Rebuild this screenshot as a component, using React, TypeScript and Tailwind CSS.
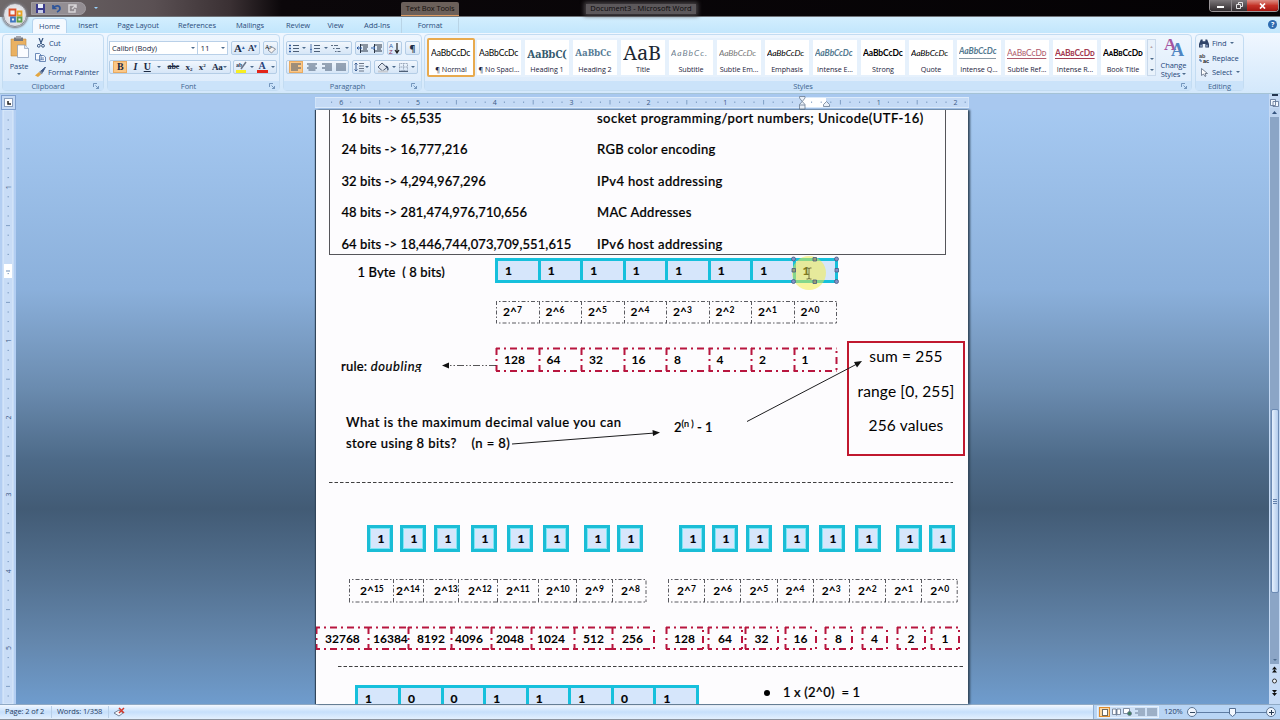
import type { ReactNode } from "react";
import clsx from "clsx";

const TABS = [
  { label: "Home", className: "w-[35px] bg-[#f4f9ff] rounded-t-sm border border-b-0 border-[#b5d3ee]" },
  { label: "Insert", className: "ml-1 w-[34px]" },
  { label: "Page Layout", className: "ml-2 w-[50px]" },
  { label: "References", className: "ml-[9px] w-[50px]" },
  { label: "Mailings", className: "ml-[5px] w-[46px]" },
  { label: "Review", className: "ml-[6px] w-[38px]" },
  { label: "View", className: "w-[37px]" },
  { label: "Add-Ins", className: "ml-[4px] w-[38px]" },
  { label: "Format", className: "ml-[5px] w-[58px] border-x border-[#b9d4e6]" },
];

const STYLES = [
  { sample: "AaBbCcDc", name: "¶ Normal", className: "text-[8.500px] text-black" },
  { sample: "AaBbCcDc", name: "¶ No Spaci...", className: "text-[8.500px] text-black" },
  { sample: "AaBbC(", name: "Heading 1", className: "text-[11px] font-bold text-[#345a6e] font-['Noto_Serif','DejaVu_Serif',serif] tracking-[-0.3px]" },
  { sample: "AaBbCc", name: "Heading 2", className: "text-[9.500px] font-bold text-[#557a94] font-['Noto_Serif','DejaVu_Serif',serif] tracking-[-0.1px]" },
  { sample: "AaB", name: "Title", className: "text-[20px] text-[#1c2733] font-['Noto_Serif','Liberation_Serif',serif] tracking-[-0.2px]" },
  { sample: "AaBbCc.", name: "Subtitle", className: "text-[8.500px] italic text-[#6f7f90] tracking-[1px]" },
  { sample: "AaBbCcDc", name: "Subtle Em...", className: "text-[8.500px] italic text-[#777]" },
  { sample: "AaBbCcDc", name: "Emphasis", className: "text-[8.500px] italic text-black" },
  { sample: "AaBbCcDc", name: "Intense E...", className: "text-[8.500px] italic font-bold text-[#53798f]" },
  { sample: "AaBbCcDc", name: "Strong", className: "text-[8.500px] font-bold text-black" },
  { sample: "AaBbCcDc", name: "Quote", className: "text-[8.500px] italic text-black" },
  { sample: "AaBbCcDc", name: "Intense Q...", className: "text-[8.500px] italic font-bold text-[#53798f] border-b border-[#8a9aa5] pb-[2px]" },
  { sample: "AᴀBʙCᴄDᴅ", name: "Subtle Ref...", className: "text-[8.500px] text-[#b05a6c] underline underline-offset-2 tracking-[-0.2px]" },
  { sample: "AᴀBʙCᴄDᴅ", name: "Intense R...", className: "text-[8.500px] font-bold text-[#a33a50] underline underline-offset-2 tracking-[-0.2px]" },
  { sample: "AᴀBʙCᴄDᴅ", name: "Book Title", className: "text-[8.500px] font-bold text-black tracking-[-0.2px]" },
];

const BIT_SIZES = [
  { size: "16 bits -> 65,535", use: "socket programming/port numbers; Unicode(UTF-16)", className: "tracking-[0.46px]" },
  { size: "24 bits -> 16,777,216", use: "RGB color encoding", className: "tracking-[0.3px]" },
  { size: "32 bits -> 4,294,967,296", use: "IPv4 host addressing", className: "tracking-[0.36px]" },
  { size: "48 bits -> 281,474,976,710,656", use: "MAC Addresses", className: "tracking-[0.3px]" },
  { size: "64 bits -> 18,446,744,073,709,551,615", use: "IPv6 host addressing", className: "tracking-[0.36px]" },
];

const EXPONENTS = ["7", "6", "5", "4", "3", "2", "1", "0"];

const HIGH_POWERS = [
  { exp: "15", className: "w-[44px] pl-[11px]" },
  { exp: "14", className: "w-[30px] pl-[3px]" },
  { exp: "13", className: "w-[35px] pl-[11px]" },
  { exp: "12", className: "w-[39px] pl-[10px]" },
  { exp: "11", className: "w-[41px] pl-[9px]" },
  { exp: "10", className: "w-[38px] pl-[8px]" },
  { exp: "9", className: "w-[36px] pl-[9px]" },
  { exp: "8", className: "w-[34px] pl-[9px]" },
];

const HIGH_VALUES = [
  { value: "32768", className: "w-[52px] pl-[9px]" },
  { value: "16384", className: "w-[40px] pl-[5px]" },
  { value: "8192", className: "w-[43px] pl-[9px]" },
  { value: "4096", className: "w-[40px] pl-[4px]" },
  { value: "2048", className: "w-[40px] pl-[5px]" },
  { value: "1024", className: "w-[43px] pl-[6px]" },
  { value: "512", className: "w-[38px] pl-[9px]" },
  { value: "256", className: "w-[42px] pl-[10px]" },
];

const LOW_VALUES = [
  { value: "128", className: "w-[37px]" },
  { value: "64", className: "ml-[5px] w-[34px]" },
  { value: "32", className: "ml-[3px] w-[33px]" },
  { value: "16", className: "ml-[7px] w-[31px]" },
  { value: "8", className: "ml-[9px] w-[27px]" },
  { value: "4", className: "ml-[10px] w-[25px]" },
  { value: "2", className: "ml-[10px] w-[28px]" },
  { value: "1", className: "ml-[6px] w-[28px]" },
];

const BOX_GAPS = ["", "ml-[7px]", "ml-[8px]", "ml-[11px]", "ml-[10px]", "ml-[10px]", "ml-[15px]", "ml-[7px]"];

function Caret({ className }: { className?: string }) {
  return (
    <svg className={clsx("h-[2px] w-[4px] shrink-0", className)} viewBox="0 0 4 2">
      <path d="M0 0h4L2 2z" fill="#4c6a8c" />
    </svg>
  );
}

function Launcher() {
  return (
    <svg className="h-[6px] w-[6px]" viewBox="0 0 6 6" fill="none" stroke="#5d83ad" strokeWidth="0.8">
      <path d="M.5 4V.5H4M2.500 2.500l3 3M5.500 3v2.500H3" />
    </svg>
  );
}

function Group({ label, className, launcher = true, children }: {
  label: string;
  className: string;
  launcher?: boolean;
  children: ReactNode;
}) {
  return (
    <div className={clsx("flex h-[57px] shrink-0 flex-col rounded-sm border border-[#c3dcf2] bg-linear-to-b from-[#eef6fe] to-[#dcebfb]", className)}>
      <div className="h-[46px]">{children}</div>
      <div className="flex h-[9px] items-center bg-[#cbe3fa] text-[#3f6590]">
        <span className="flex-1 text-center">{label}</span>
        {launcher && <span className="mr-[4px]"><Launcher /></span>}
      </div>
    </div>
  );
}

function Tools({ className, children }: { className?: string; children: ReactNode }) {
  return (
    <div className={clsx("flex h-[14px] items-center justify-around rounded-xs border border-[#b4cde6] bg-linear-to-b from-[#f2f7fd] to-[#d6e6f7] leading-none", className)}>
      {children}
    </div>
  );
}

function Lines({ kind, className }: { kind: "left" | "center" | "right" | "full"; className?: string }) {
  const d = {
    left: "M0 1h10M0 3h7M0 5h10M0 7h7",
    center: "M0 1h10M1.500 3h7M0 5h10M1.500 7h7",
    right: "M0 1h10M3 3h7M0 5h10M3 7h7",
    full: "M0 1h10M0 3h10M0 5h10M0 7h10",
  }[kind];
  return (
    <svg className={clsx("h-[8px] w-[10px]", className)} viewBox="0 0 10 8" stroke="#41556e" strokeWidth="1">
      <path d={d} />
    </svg>
  );
}

function ListIcon({ kind }: { kind: "bullet" | "number" | "multi" }) {
  return (
    <svg className="h-[9px] w-[10px]" viewBox="0 0 10 9" stroke="#4d5f76" strokeWidth="1">
      {kind === "bullet" && <path d="M0 1.500h2M0 4.500h2M0 7.500h2" stroke="#2d5aa0" strokeWidth="1.600" />}
      {kind === "number" && <path d="M1 0v3M0 4h2M0 5.500h2M1 6v3" stroke="#2d5aa0" strokeWidth=".8" />}
      {kind === "multi" ? (
        <path d="M0 1.500h2M3 1.500h4M2 4.500h1.500M5 4.500h4M4 7.500h1.500M6.500 7.500h3" strokeWidth=".9" />
      ) : (
        <path d="M4 1.500h6M4 4.500h6M4 7.500h6" />
      )}
    </svg>
  );
}

function IndentIcon({ flip }: { flip?: boolean }) {
  return (
    <svg className="h-[9px] w-[11px]" viewBox="0 0 11 9" stroke="#2a3646" fill="none">
      <path d="M4 1h7M6 3h5M6 5h4M3 7h8M3.500 0v9" strokeWidth="1" />
      <path d={flip ? "M0 4h4M2.500 2.500L4 4 2.500 5.500" : "M5 4H0M1.500 2.500L0 4l1.500 1.500"} stroke="#2d5aa0" />
    </svg>
  );
}

function TitleBar() {
  return (
    <header className="relative flex h-[17px] shrink-0 items-center border-b border-[#6f7378] bg-[linear-gradient(90deg,#6f696b_0%,#5a5053_12%,#3a3033_18%,#0b070a_22%,#040204_100%)]">
      <div className="ml-[31px] flex h-[13px] w-[55px] items-center gap-[7px] rounded-r-full border border-[#a09ca1] bg-[#a6a3a8]/70 pl-[4px]">
        <svg className="h-[9px] w-[9px]" viewBox="0 0 9 9">
          <path d="M0 0h9v9H0z" fill="#3a3a8c" />
          <path d="M2 0h5v4H2z" fill="#e9effb" />
          <path d="M2 6h5v3H2z" fill="#c5cbe8" />
        </svg>
        <svg className="h-[9px] w-[9px]" viewBox="0 0 9 9" fill="none" stroke="#2f5599" strokeWidth="1.700">
          <path d="M1 1v3.500h3.500M1.500 4C3 1 8 1 8 4.500 8 6.500 6 7.500 5 8" />
        </svg>
        <svg className="h-[9px] w-[9px]" viewBox="0 0 9 9" fill="none" stroke="#d8d5d8" strokeWidth="1.500">
          <path d="M5 1H1v7h6V5M4 5l4-4M5 1h3v3" />
        </svg>
      </div>
      <Caret className="ml-[8px] brightness-200" />
      <div className="absolute left-[401px] top-[2px] flex h-[14px] w-[58px] items-center justify-center rounded-t-xs border-b border-[#d9985f] bg-[#6b605a] text-[7.500px] tracking-[-0.15px] text-[#15100e]">
        Text Box Tools
      </div>
      <div className="absolute left-[586px] top-[4px] flex h-[10px] w-[110px] items-center justify-center whitespace-nowrap bg-[#5c585b] text-[7.500px] text-[#0c0a0c] shadow-[0_0_4px_2px_#464245]">
        Document3 - Microsoft Word
      </div>
      <div className="absolute right-[1px] top-0 flex h-[12px] overflow-hidden rounded-b-sm border border-t-0 border-[#9a9598]">
        <div className="flex w-[22px] items-center justify-center border-r border-[#8d888b] bg-linear-to-b from-[#7c777a] to-[#322d30]">
          <span className="mt-[2px] h-[2px] w-[7px] bg-white" />
        </div>
        <div className="flex w-[15px] items-center justify-center bg-linear-to-b from-[#7c777a] to-[#322d30]">
          <svg className="h-[7px] w-[7px]" viewBox="0 0 7 7" fill="none" stroke="#e6e6e6">
            <path d="M2.500 2V.5h4v4H5M.5 2.500h4v4h-4z" />
          </svg>
        </div>
        <div className="flex w-[31px] items-center justify-center bg-linear-to-b from-[#dc8d84] via-[#c43228] to-[#a5150f]">
          <svg className="h-[6px] w-[7px]" viewBox="0 0 7 6" stroke="white" strokeWidth="1.700">
            <path d="M1 .5l5 5M6 .5l-5 5" />
          </svg>
        </div>
      </div>
    </header>
  );
}

function TabBar() {
  return (
    <nav className="flex h-[16px] shrink-0 items-end bg-linear-to-b from-[#d3eefe] to-[#c2e6fc] pl-[32px] text-[7.500px] tracking-[-0.1px] text-[#2b4c7c]">
      {TABS.map((tab) => (
        <div key={tab.label} className={clsx("flex h-[15px] items-center justify-center pt-px whitespace-nowrap", tab.className)}>
          {tab.label}
        </div>
      ))}
      <div className="mr-[3px] mb-[4px] ml-auto flex h-[9px] w-[9px] items-center justify-center rounded-full bg-[#2f6cb0] text-[7px] font-bold leading-none text-white">
        ?
      </div>
    </nav>
  );
}

function ClipboardGroup() {
  return (
    <Group label="Clipboard" className="w-[102px]">
      <div className="flex">
        <div className="flex w-[32px] flex-col items-center pt-[1px]">
          <svg className="h-[22px] w-[19px]" viewBox="0 0 19 22">
            <path d="M1 3h15v17H1z" fill="#eab162" stroke="#c08a45" strokeWidth=".6" />
            <path d="M4 1.500h9V5H4z" fill="#75767c" />
            <path d="M6 0h5v2.500H6z" fill="#a5a6ac" />
            <path d="M7.500 9h7l4 3.500V21.500H7.500z" fill="#fbfcff" stroke="#8296b4" strokeWidth=".7" />
            <path d="M14.500 9v3.500h4" fill="#dae5f4" stroke="#8296b4" strokeWidth=".6" />
          </svg>
          <span className="mt-[3px] leading-[10px] text-[7.500px]">Paste</span>
          <Caret className="mt-[2px]" />
        </div>
        <div className="flex flex-col pt-px whitespace-nowrap">
          <div className="flex h-[14.500px] items-center gap-[4px]">
            <svg className="ml-[2px] h-[10px] w-[8px]" viewBox="0 0 8 10" fill="none" stroke="#34527e">
              <path d="M2 0l2.500 6M6 0L3.500 6" strokeWidth="1.200" />
              <circle cx="1.800" cy="7.800" r="1.400" />
              <circle cx="6" cy="7.800" r="1.400" />
            </svg>
            Cut
          </div>
          <div className="flex h-[14.500px] items-center gap-[3px]">
            <svg className="h-[9px] w-[11px]" viewBox="0 0 11 9" fill="#f5f9ff" stroke="#4a6ea6" strokeWidth=".8">
              <path d="M.5.5h4l1.500 1.500v5H.5zM4.500 2.500h4L10.500 4v4.500h-6zM6 5h3M6 6.700h3" />
            </svg>
            Copy
          </div>
          <div className="flex h-[14.500px] items-center gap-[2px]">
            <svg className="h-[10px] w-[11px]" viewBox="0 0 11 10">
              <path d="M10.500 0L6 4l1.500 1.500z" fill="#3d5786" stroke="#3d5786" />
              <path d="M5.500 3.500l2.500 2.500-2 1.500L4 5z" fill="#7e8aa0" />
              <path d="M4 5l2 2.500L3 10 0 8.500z" fill="#e3a640" />
            </svg>
            Format Painter
          </div>
        </div>
      </div>
    </Group>
  );
}

function FontGroup() {
  return (
    <Group label="Font" className="ml-[3px] w-[173px]">
      <div className="flex flex-col gap-[5px] px-[1px] pt-[6px] text-[#1b2a42]">
        <div className="flex">
          <div className="flex h-[14px] w-[90px] items-center justify-between border border-[#b9d0e8] bg-white px-[2px] text-[7.500px]">
            Calibri (Body)
            <Caret />
          </div>
          <div className="flex h-[14px] w-[30px] items-center justify-between border border-l-0 border-[#b9d0e8] bg-white px-[2px] text-[8px]">
            11
            <Caret />
          </div>
          <Tools className="ml-[3px] w-[29px] font-['Liberation_Serif',serif] font-bold">
            <span className="text-[11px]">A<sup className="text-[5px] text-[#2d5aa0]">▴</sup></span>
            <span className="text-[9px]">A<sup className="text-[5px] text-[#2d5aa0]">▾</sup></span>
          </Tools>
          <Tools className="ml-[3px] w-[15px]">
            <svg className="h-[11px] w-[11px]" viewBox="0 0 11 11">
              <text x="0" y="6" fontSize="6" fontFamily="Liberation Serif">Aa</text>
              <path d="M3 7l4-3 3.500 2-4 4z" fill="#f7f3f0" stroke="#6e7787" strokeWidth=".8" />
            </svg>
          </Tools>
        </div>
        <div className="flex">
          <Tools className="w-[122px] font-['Liberation_Serif',serif] text-[9px] font-bold">
            <span className="flex h-[12px] w-[14px] items-center justify-center border border-[#e9ab62] bg-[#fbc786] text-[10px]">B</span>
            <span className="text-[10px] italic">I</span>
            <span className="text-[10px] underline">U</span>
            <Caret />
            <span className="text-[8px] line-through">abc</span>
            <span>x<sub className="text-[5px]">2</sub></span>
            <span>x<sup className="text-[5px]">2</sup></span>
            <span className="flex items-center">Aa<Caret /></span>
          </Tools>
          <Tools className="ml-[2px] w-[44px]">
            <svg className="h-[12px] w-[11px]" viewBox="0 0 11 12">
              <path d="M0 9h10v3H0z" fill="#f7ee23" />
              <text x="0" y="6" fontSize="6" fontWeight="bold" fontFamily="Liberation Serif" fill="#2c3c55">ab</text>
              <path d="M5 8l5-7" stroke="#6b7688" strokeWidth="1.500" />
            </svg>
            <Caret />
            <svg className="h-[12px] w-[11px] overflow-visible" viewBox="0 0 11 12">
              <path d="M0 9h11v3H0z" fill="#e32519" />
              <text x="1.500" y="8" fontSize="10" fontWeight="bold" fontFamily="Liberation Serif" fill="#27427c">A</text>
            </svg>
            <Caret />
          </Tools>
        </div>
      </div>
    </Group>
  );
}

function ParagraphGroup() {
  return (
    <Group label="Paragraph" className="ml-[3px] w-[139px]">
      <div className="flex flex-col gap-[5px] pt-[6px] pl-[2px]">
        <div className="flex gap-[3px]">
          <Tools className="w-[66px]">
            <ListIcon kind="bullet" />
            <Caret />
            <ListIcon kind="number" />
            <Caret />
            <ListIcon kind="multi" />
            <Caret />
          </Tools>
          <Tools className="w-[29px]">
            <IndentIcon />
            <IndentIcon flip />
          </Tools>
          <Tools className="w-[15px]">
            <svg className="h-[11px] w-[11px]" viewBox="0 0 11 11">
              <text x="0" y="5" fontSize="6" fill="#2d5aa0" fontFamily="Liberation Sans">A</text>
              <text x="0" y="11" fontSize="6" fill="#8b3562" fontFamily="Liberation Sans">Z</text>
              <path d="M8 0v9M6 7l2 3 2-3" fill="none" stroke="#222" strokeWidth="1.200" />
            </svg>
          </Tools>
          <Tools className="w-[15px] text-[9px] font-bold text-[#1d2e49]">
            <span>¶</span>
          </Tools>
        </div>
        <div className="flex gap-[3px]">
          <Tools className="w-[63px]">
            <span className="flex h-[12px] w-[14px] items-center justify-center border border-[#e9ab62] bg-[#fbc786]">
              <Lines kind="left" />
            </span>
            <Lines kind="center" />
            <Lines kind="right" />
            <Lines kind="full" />
          </Tools>
          <Tools className="w-[19px]">
            <svg className="h-[10px] w-[10px]" viewBox="0 0 10 10" fill="none" stroke="#3c5f94">
              <path d="M2 1v8M.5 2.500L2 1l1.500 1.500M.5 7.500L2 9l1.500-1.500" />
              <path d="M5 1.500h5M5 4h5M5 6.500h5M5 9h5" stroke="#5d6a7c" strokeWidth=".9" />
            </svg>
            <Caret />
          </Tools>
          <Tools className="w-[44px]">
            <svg className="h-[11px] w-[12px]" viewBox="0 0 12 11">
              <path d="M1 5l4-4 5 4.500L5.500 9z" fill="#dfe5ee" stroke="#4c5a70" />
              <path d="M9 4c2 1 2.500 3 1.500 4.500" fill="none" stroke="#2c3e5c" strokeWidth="1.200" />
              <path d="M1 9.500h10" stroke="#c9ccd2" strokeWidth="2" />
            </svg>
            <Caret />
            <svg className="h-[9px] w-[9px]" viewBox="0 0 9 9" fill="none" stroke="#7f8ea5" strokeWidth=".8">
              <path d="M.5.5h8v7h-8zM4.500.5v7M.5 4h8" strokeDasharray="1 .6" />
              <path d="M0 8.500h9" stroke="#2b3c55" />
            </svg>
            <Caret />
          </Tools>
        </div>
      </div>
    </Group>
  );
}

function StylesGroup() {
  return (
    <Group label="Styles" className="ml-[2px] w-[768px]">
      <div className="flex">
        <div className="flex pt-[3px] pl-[2px]">
          {STYLES.map((style, i) => (
            <div
              key={style.name}
              className={clsx(
                "flex h-[39px] w-[48px] flex-col items-center overflow-hidden border-2 bg-white",
                i === 0 ? "rounded-xs border-[#e8aa4e]" : "border-[#e6f1fc] border-x-[2.500px]",
              )}
            >
              <div className="flex h-[24px] w-[40px] items-center overflow-hidden whitespace-nowrap pt-[2px] leading-none">
                <span className={clsx("font-['Lato',sans-serif]", style.className)}>{style.sample}</span>
              </div>
              <div className="h-[11px] whitespace-nowrap text-[7.200px] leading-[11px] tracking-[-0.05px] text-[#1d2440]">{style.name}</div>
            </div>
          ))}
        </div>
        <div className="mt-[4px] flex h-[37px] w-[9px] flex-col justify-around border border-[#c9d9eb] bg-[#e9f2fb]">
          <span className="text-center text-[4px] leading-none text-[#b7a4a8]">▲</span>
          <Caret className="mx-auto" />
          <Caret className="mx-auto" />
        </div>
        <div className="ml-[1px] flex w-[33px] flex-col items-center pt-[2px] text-center">
          <svg className="h-[22px] w-[20px] overflow-visible" viewBox="0 0 20 22">
            <text x="0" y="13" fontSize="17" fontWeight="bold" fontFamily="Liberation Serif" fill="#a4549f">A</text>
            <text x="7" y="19" fontSize="18" fontWeight="bold" fontFamily="Liberation Serif" fill="#4f86c2">A</text>
          </svg>
          <div className="mt-[2px] text-[7.500px] leading-[9px]">Change</div>
          <div className="flex items-center gap-[2px] text-[7.500px] leading-[8px]">Styles<Caret /></div>
        </div>
      </div>
    </Group>
  );
}

function EditingGroup() {
  return (
    <Group label="Editing" launcher={false} className="ml-[3px] w-[49px]">
      <div className="flex flex-col pt-px pl-[3px] whitespace-nowrap">
        <div className="flex h-[14.500px] items-center gap-[3px]">
          <svg className="h-[9px] w-[10px]" viewBox="0 0 11 9" fill="#2f4468">
            <path d="M2 0h2v2h3V0h2l2 5v4H7V5H4v4H0V5z" />
            <path d="M1.500 6h1.500v2H1.500zM8 6h1.500v2H8z" fill="#9fb4d6" />
          </svg>
          Find <Caret />
        </div>
        <div className="flex h-[14.500px] items-center gap-[2px]">
          <svg className="h-[10px] w-[11px]" viewBox="0 0 11 10">
            <text x="0" y="4.500" fontSize="5.500" fontWeight="bold" fontFamily="Liberation Sans" fill="#444">ab</text>
            <text x="4" y="10" fontSize="5.500" fontWeight="bold" fontFamily="Liberation Sans" fill="#222">ac</text>
            <path d="M1 6v2h2" fill="none" stroke="#2d5aa0" />
          </svg>
          Replace
        </div>
        <div className="flex h-[14.500px] items-center gap-[4px]">
          <svg className="ml-[2px] h-[9px] w-[7px]" viewBox="0 0 7 9" fill="white" stroke="#59677c" strokeWidth=".8">
            <path d="M.5.5v7l2-1.500L4 8.500l1-.5-1-2.500h2.500z" />
          </svg>
          Select <Caret />
        </div>
      </div>
    </Group>
  );
}

function HorizontalRuler() {
  const ticks = Array.from({ length: 68 }, (_, i) => i - 49);
  return (
    <svg className="absolute left-[315px] top-[1px] h-[17px] w-[654px]" viewBox="315 95 654 17">
      <path d="M315 97.500h654v10h-654z" fill="#c4daf5" stroke="#dcebfb" />
      <path d="M802 98h24v9h-24z" fill="#fff" />
      {ticks.map((i) => {
        const x = 802 + i * 9.6;
        if (i % 8 === 0) {
          return i === 0 ? null : (
            <text key={i} x={x} y="105" textAnchor="middle" fontSize="7" fontFamily="Open Sans" fill="#3c5a86">
              {Math.abs(i / 8)}
            </text>
          );
        }
        return <path key={i} d={i % 4 === 0 ? `M${x} 100v4.500` : `M${x} 101.500v1.500`} stroke="#6f8fb8" strokeWidth=".8" />;
      })}
      <path d="M799.500 96.500h5.500v1.500l-2.700 3.500 2.700 3v4.500h-5.500v-4.500l2.700-3-2.700-3.500zM799.500 105h5.500" fill="#eaf0f8" stroke="#6b7c93" strokeWidth=".8" />
      <path d="M823.500 106.500v-2l3-3 3 3v2z" fill="#eaf0f8" stroke="#6b7c93" strokeWidth=".8" />
    </svg>
  );
}

function VerticalRuler() {
  const ticks = Array.from({ length: 62 }, (_, i) => i - 15);
  return (
    <div className="w-[16px] bg-[#b3cef2]">
      <svg className="mt-[16px] h-[594px] w-[16px]" viewBox="0 110 16 594">
        <path d="M3 110h10v594H3z" fill="#c8dcf6" stroke="#dcebfb" />
        <path d="M4 264h8v14H4z" fill="#fff" />
        {ticks.map((i) => {
          const y = 264 + i * 9.6;
          if (i % 8 === 0) {
            return i === 0 ? null : (
              <text key={i} x="0" y="0" transform={`translate(10.500 ${y}) rotate(-90)`} textAnchor="middle" fontSize="7" fontFamily="Open Sans" fill="#3c5a86">
                {Math.abs(i / 8)}
              </text>
            );
          }
          return <path key={i} d={i % 4 === 0 ? `M6 ${y}h4` : `M7.500 ${y}h1.500`} stroke="#6f8fb8" strokeWidth=".8" />;
        })}
        <path d="M6 271h4" stroke="#6f8fb8" />
      </svg>
    </div>
  );
}

// Dash-dot text box outline. The right edge is left to the next cell unless the box is closed.
function DashBox({ tone, closed, className, children }: {
  tone: "thin" | "red";
  closed?: boolean;
  className?: string;
  children: ReactNode;
}) {
  const red = tone === "red";
  return (
    <div className={clsx("relative flex shrink-0 items-center", className)}>
      <svg
        className="absolute inset-0 h-full w-full overflow-visible"
        stroke={red ? "#b8163f" : "#5a5a60"}
        strokeWidth={red ? 2 : 1}
        strokeDasharray={red ? "7 4 2 4" : "4 2 1.500 2"}
      >
        <line x1="0" y1="0.5" x2="100%" y2="0.5" strokeDashoffset="3" />
        <line x1="0" y1="100%" x2="100%" y2="100%" strokeDashoffset="3" />
        <line x1="0.5" y1="0" x2="0.5" y2="100%" />
        {closed && <line x1="100%" y1="0" x2="100%" y2="100%" strokeDashoffset="8" />}
      </svg>
      <span className="relative">{children}</span>
    </div>
  );
}

function Power({ exp }: { exp: string }) {
  return (
    <>
      2^<sup className="-top-[3.500px] text-[8.500px] leading-none">{exp}</sup>
    </>
  );
}

function ByteCells({ bits, className }: { bits: string; className?: string }) {
  return (
    <div className={clsx("flex border-[3px] border-[#16c0dc] bg-[#d6e6fb] text-[12px] font-bold", className)}>
      {bits.split("").map((bit, i) => (
        <div key={i} className={clsx("flex h-full items-center", i === 0 ? "w-[40px] pl-[7px]" : "w-[42.600px] border-l-[3px] border-[#16c0dc] pl-[7px]")}>
          {bit}
        </div>
      ))}
    </div>
  );
}

function LooseBits({ className }: { className?: string }) {
  return (
    <div className={clsx("flex", className)}>
      {BOX_GAPS.map((gap, i) => (
        <div key={i} className={clsx("flex h-[27px] w-[26px] items-center justify-center border-[3px] border-[#1bbdd6] bg-[#d6e6fb] pt-px pl-[2px] text-[12px] font-bold shadow-[inset_0_0_0_1px_#7fe6f6]", gap)}>
          1
        </div>
      ))}
    </div>
  );
}

function DocumentPage() {
  return (
    <main className="absolute left-[316px] top-[16px] h-[594px] w-[652px] overflow-hidden bg-[#fdfcfe] font-['Lato',sans-serif] text-[13px] font-medium leading-none text-black shadow-[2px_0_2px_#33475c,-1px_0_1px_#33475c] [-webkit-text-stroke:0.2px_#000]">
      <section className="ml-[13px] h-[145px] w-[617px] overflow-hidden border border-t-0 border-[#55555a]">
        <div className="-mt-[7.500px] pl-[11.500px]">
          {BIT_SIZES.map(({ size, use, className }) => (
            <div key={size} className="grid h-[31.500px] grid-cols-[255.500px_1fr] items-center whitespace-nowrap">
              <span className="tracking-[0.08px]">{size}</span>
              <span className={className}>{use}</span>
            </div>
          ))}
        </div>
      </section>

      <div className="flex h-[45px] items-start pt-[3px]">
        <div className="ml-[41.500px] mt-[8px] h-[12px] w-[137.500px] overflow-hidden whitespace-pre tracking-[0.1px]">1 Byte  ( 8 bits)</div>
        <ByteCells bits="11111111" className="h-[25px] w-[343px]" />
      </div>

      <div className="mt-[1px] ml-[180px] flex text-[12px] font-bold [-webkit-text-stroke:0]">
        {EXPONENTS.map((exp) => (
          <DashBox key={exp} tone="thin" closed={exp === "0"} className="h-[22px] w-[42.500px] pl-[7px]">
            <Power exp={exp} />
          </DashBox>
        ))}
      </div>

      <div className="mt-[25px] flex">
        <div className="ml-[25px] mt-[12px] h-[12px] w-[155px] overflow-hidden tracking-[0.2px]">
          rule: <i className="font-normal tracking-[0.6px]">doubling</i>
        </div>
        <div className="flex text-[12px] font-bold [-webkit-text-stroke:0]">
          {["128", "64", "32", "16", "8", "4", "2", "1"].map((value) => (
            <DashBox key={value} tone="red" closed={value === "1"} className="h-[23px] w-[42.500px] pl-[8px]">
              {value}
            </DashBox>
          ))}
        </div>
      </div>

      <div className="flex pt-[40px]">
        <div className="ml-[30px] w-[328px] whitespace-pre leading-[21px]">
          <div className="tracking-[0.55px]">What is the maximum decimal value you can</div>
          <div className="tracking-[0.4px]">store using 8 bits?    (n = 8)</div>
        </div>
        <div className="mt-[9px]">
          2<sup className="-top-[5px] text-[9px] leading-none">(n )</sup> - 1
        </div>
      </div>

      <div className="absolute left-[531px] top-[231px] flex h-[115px] w-[118px] flex-col items-center border-2 border-[#c0182f] text-[15.500px] font-normal leading-[34.500px] tracking-[0.15px] whitespace-nowrap [-webkit-text-stroke:0]">
        <div className="-mt-[4px]">sum = 255</div>
        <div>range [0, 255]</div>
        <div>256 values</div>
      </div>

      {/* connectors between the text boxes */}
      <svg className="absolute left-0 top-0 h-[594px] w-[652px]" viewBox="316 110 652 594" fill="none" stroke="#1d1d1f" strokeWidth="1">
        <path d="M496 365.500h-46" strokeDasharray="7 2 1.500 2 1.500 2" strokeOpacity=".75" />
        <path d="M442 365.500l7-3v6z" fill="#111" stroke="none" />
        <path d="M512 444l143-11" />
        <path d="M660 432.500l-7.500-2.500.5 6z" fill="#111" stroke="none" />
        <path d="M747 421.500l109-57" />
        <path d="M862 361l-8 1 3 5.500z" fill="#111" stroke="none" />
        <path d="M329 482.500h624M338 666.500h625" strokeDasharray="3.500 2" strokeOpacity=".85" />
      </svg>

      <div className="absolute left-[51px] top-[415px] flex">
        <LooseBits />
        <LooseBits className="ml-[36px]" />
      </div>

      <div className="absolute left-[33px] top-[469px] flex text-[12px] font-bold [-webkit-text-stroke:0]">
        {HIGH_POWERS.map(({ exp, className }) => (
          <DashBox key={exp} tone="thin" closed={exp === "8"} className={clsx("h-[23px] pt-px", className)}>
            <Power exp={exp} />
          </DashBox>
        ))}
        <div className="ml-[22px] flex">
          {EXPONENTS.map((exp) => (
            <DashBox key={exp} tone="thin" closed={exp === "0"} className="h-[23px] w-[36.200px] pt-px pl-[9px]">
              <Power exp={exp} />
            </DashBox>
          ))}
        </div>
      </div>

      <div className="absolute left-0 top-[517px] flex text-[12px] font-bold [-webkit-text-stroke:0]">
        {HIGH_VALUES.map(({ value, className }) => (
          <DashBox key={value} tone="red" closed={value === "256"} className={clsx("h-[22px] pt-px", className)}>
            {value}
          </DashBox>
        ))}
        <div className="ml-[12px] flex">
          {LOW_VALUES.map(({ value, className }) => (
            <DashBox key={value} tone="red" closed className={clsx("h-[22px] justify-center pt-px", className)}>
              {value}
            </DashBox>
          ))}
        </div>
      </div>

      <div className="absolute left-[39px] top-[575px] flex items-start">
        <ByteCells bits="10011101" className="h-[28px] w-[344px]" />
        <div className="mt-[1px] ml-[65px] flex items-center whitespace-pre tracking-[0.15px]">
          <span className="mr-[13px] h-[6px] w-[6px] rounded-full bg-black" />
          1 x (2^0)  = 1
        </div>
      </div>

      <SelectedCell />
    </main>
  );
}

function SelectedCell() {
  return (
    <svg className="absolute left-[472px] top-[143px] h-[38px] w-[54px]" viewBox="788 253 54 38">
      <circle cx="809" cy="273" r="17" fill="#f5ee3c" fillOpacity=".5" />
      <g fill="#7f93c8" stroke="#4a5a80" strokeWidth=".8">
        <circle cx="793.500" cy="259" r="2" />
        <circle cx="836.500" cy="259" r="2" />
        <circle cx="793.500" cy="281.500" r="2" />
        <circle cx="836.500" cy="281.500" r="2" />
        <path d="M835 268.500h3.500v3.500H835z" />
        <path d="M792 268.500h3.500v3.500H792zM813 257.500h3.500v3.500H813zM813 280h3.500v3.500H813z" fill="#9a9f72" />
      </g>
      <path d="M806.500 268h2l.5 1 .5-1h2M809 269v9M806.500 279h2l.5-1 .5 1h2" fill="none" stroke="#56562c" strokeWidth=".8" />
    </svg>
  );
}

function ScrollBar() {
  return (
    <div className="ml-auto flex w-[11px] flex-col items-center bg-[#c5daf5]">
      <div className="h-[2px] w-[6px] bg-[#24354f]" />
      <svg className="mt-[2px] h-[10px] w-[9px]" viewBox="0 0 9 10" fill="#f3f8ff" stroke="#5a6f90" strokeWidth=".8">
        <path d="M.5 1.500h5v6h-5zM3 3.500h5.500v5H3z" />
      </svg>
      <div className="flex h-[556px] w-[9px] flex-col items-center bg-[#8ba5c6]">
        <div className="flex h-[9px] w-full items-center justify-center bg-[#bdd3ef]">
          <svg className="h-[3px] w-[5px]" viewBox="0 0 5 3"><path d="M0 3h5L2.500 0z" fill="#35547f" /></svg>
        </div>
        <div className="mt-[292px] flex h-[184px] w-[8px] flex-col items-center justify-center gap-[1px] rounded-xs border border-[#6c8bb4] bg-linear-to-r from-[#e5f0fd] to-[#b4cdec]">
          <span className="h-px w-[4px] bg-[#6482ad]" />
          <span className="h-px w-[4px] bg-[#6482ad]" />
          <span className="h-px w-[4px] bg-[#6482ad]" />
        </div>
        <Caret className="mt-auto mb-[3px]" />
      </div>
      <svg className="h-[34px] w-[7px]" viewBox="0 0 7 34" fill="#111">
        <path d="M1 5.500l2.500-3 2.500 3zM1 8.500l2.500-3 2.500 3zM1 26h5l-2.500 3zM1 29h5l-2.500 3z" />
        <circle cx="3.500" cy="17" r="2" fill="#f2f6fc" stroke="#333" />
      </svg>
    </div>
  );
}

function StatusBar() {
  return (
    <footer className="flex h-[15px] shrink-0 items-center border-t border-[#8fa9c4] bg-linear-to-b from-[#f2f8ff] via-[#c6dffb] to-[#e3f0fe] text-[7.500px] text-[#274064]">
      <div className="ml-[5px] w-[46px] tracking-[-0.1px]">Page: 2 of 2</div>
      <div className="w-[58px] border-x border-[#b8cfe8] pl-[5px] tracking-[-0.1px]">Words: 1/358</div>
      <svg className="ml-[5px] h-[10px] w-[11px]" viewBox="0 0 11 10">
        <path d="M0 6l5-3 4 3-4 3z" fill="#f4f6fa" stroke="#5a6a82" strokeWidth=".8" />
        <path d="M5 1l5 5M10 1L5 6" stroke="#d2372b" strokeWidth="1.500" />
      </svg>
      <div className="ml-auto flex h-full items-center border-l border-[#91aed0] bg-[#b9d5f4] pl-[3px]">
        <div className="flex h-[12px] w-[62px] items-center justify-around border border-[#e6f1fd] bg-[#cfe1f6]">
          <span className="flex h-[10px] w-[11px] items-center justify-center border border-[#e08c2c] bg-[#fbd7a0]">
            <span className="h-[7px] w-[6px] border border-[#6f6a60] bg-white" />
          </span>
          <svg className="h-[8px] w-[9px]" viewBox="0 0 9 8" fill="white" stroke="#66758c" strokeWidth=".8"><path d="M.5 1h3.500v5.500H.5zM5 1h3.500v5.500H5zM4.500 1v6.500" /></svg>
          <svg className="h-[8px] w-[9px]" viewBox="0 0 9 8" fill="white" stroke="#66758c" strokeWidth=".8"><path d="M.5.5h6v5h-6z" /><circle cx="6.500" cy="5.500" r="2" fill="#3f7f5c" /></svg>
          <Lines kind="right" className="h-[7px] w-[7px] opacity-70" />
          <Lines kind="full" className="h-[7px] w-[8px] opacity-70" />
        </div>
        <span className="ml-[5px] w-[20px] tracking-[-0.1px]">120%</span>
        <div className="ml-[3px] flex items-center">
          <span className="flex h-[10px] w-[10px] items-center justify-center rounded-full border border-[#5d7695] bg-[#eef4fc]">
            <span className="h-px w-[5px] bg-[#33485f]" />
          </span>
          <div className="relative h-px w-[69px] bg-[#5f7da3]">
            <svg className="absolute -top-[4px] left-[32px] h-[9px] w-[7px]" viewBox="0 0 7 9" fill="#f4f8fe" stroke="#556f92"><path d="M.5.5h6v5.500l-3 2.500-3-2.500z" /></svg>
          </div>
          <span className="mr-[4px] flex h-[10px] w-[10px] items-center justify-center rounded-full border border-[#5d7695] bg-[#eef4fc]">
            <svg className="h-[5px] w-[5px]" viewBox="0 0 5 5" stroke="#26394f"><path d="M0 2.500h5M2.500 0v5" /></svg>
          </span>
        </div>
      </div>
    </footer>
  );
}

function OfficeButton() {
  return (
    <div className="absolute left-[3px] top-[3px] flex h-[24px] w-[24px] items-center justify-center rounded-full border border-[#8c8a90] bg-radial from-white to-[#c9ccd6] shadow-[0_0_2px_1px_#77747a]">
      <svg className="h-[15px] w-[15px]" viewBox="0 0 15 15" fill="none" strokeWidth="1.800">
        <path d="M1.500 1.500h6v6h-6z" stroke="#d9502b" />
        <path d="M9.500 3.500h4v4h-4z" stroke="#e6a425" />
        <path d="M3 9.500h4v4H3z" stroke="#3d74bf" />
        <path d="M9.500 9.500h4v4h-4z" stroke="#5d9e49" />
      </svg>
    </div>
  );
}

export default function App() {
  return (
    <div className="relative flex h-[720px] w-[1280px] flex-col overflow-hidden bg-[#8b929c] font-['Open_Sans','Noto_Sans',sans-serif]">
      <TitleBar />
      <TabBar />
      <div className="flex h-[61px] shrink-0 items-start border-b border-[#a5c3d6] bg-linear-to-b from-[#f0f7ff] to-[#d3e8fb] pt-px pl-[2px] text-[7.500px] leading-[10px] tracking-[-0.1px] text-[#24467a]">
        <ClipboardGroup />
        <FontGroup />
        <ParagraphGroup />
        <StylesGroup />
        <EditingGroup />
      </div>
      <div className="relative flex h-[610px] shrink-0 bg-[linear-gradient(180deg,#a8cbf3_0%,#8bb0db_32%,#6b8cb0_48%,#4d6a88_60%,#425b75_68%,#547292_80%,#6487ad_90%,#6f9ccd_100%)]">
        <VerticalRuler />
        <div className="absolute left-[1px] top-[1px] flex h-[15px] w-[15px] items-center justify-center border border-[#7d9fd0] bg-[#c4d9f4]">
          <span className="flex h-[9px] w-[9px] items-center justify-center border border-[#8aa0c0] bg-white">
            <svg className="h-[4px] w-[4px]" viewBox="0 0 4 4" fill="none" stroke="#222" strokeWidth="1.500"><path d="M1 0v3h3" /></svg>
          </span>
        </div>
        <div className="absolute left-[16px] top-0 h-[16px] w-[1253px] bg-[#a8c8ef]" />
        <HorizontalRuler />
        <DocumentPage />
        <ScrollBar />
      </div>
      <StatusBar />
      <OfficeButton />
    </div>
  );
}
